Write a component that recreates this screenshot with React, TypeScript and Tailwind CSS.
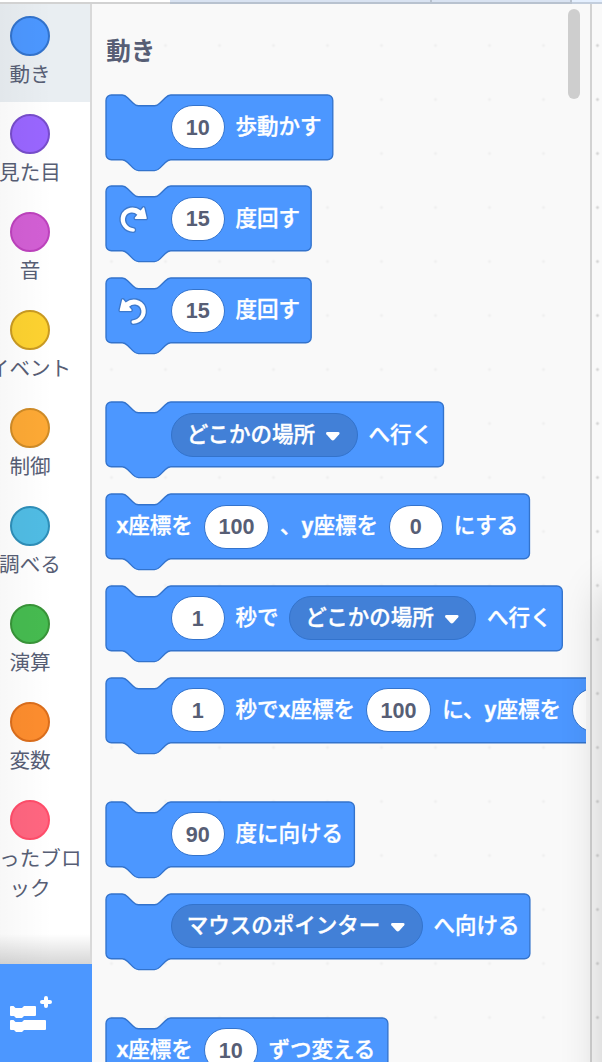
import { ReactNode } from 'react';

// Scratch block units are drawn at 1.35px each
const UNIT = 1.35;

const categories = [
  { name: '動き', color: 'bg-[#4c97ff] border-[#3373cc]', active: true },
  { name: '見た目', color: 'bg-[#9966ff] border-[#774dcb]' },
  { name: '音', color: 'bg-[#d25fd4] border-[#bd42bd]' },
  { name: 'イベント', color: 'bg-[#fdd230] border-[#c99a22]' },
  { name: '制御', color: 'bg-[#fda935] border-[#cf8b27]' },
  { name: '調べる', color: 'bg-[#50bce4] border-[#2e8eb8]' },
  { name: '演算', color: 'bg-[#46bb50] border-[#389438]' },
  { name: '変数', color: 'bg-[#fd8d2e] border-[#db6e1c]' },
  { name: '作ったブロック', color: 'bg-[#ff6680] border-[#ff4d6a]' },
];

const blockPath = (w: number) =>
  `M0,4 A4,4 0 0,1 4,0 H12 c2,0 3,1 4,2 l4,4 c1,1 2,2 4,2 h12 c2,0 3,-1 4,-2 l4,-4 c1,-1 2,-2 4,-2 H${w - 4} a4,4 0 0,1 4,4 v40 a4,4 0 0,1 -4,4 H48 c-2,0 -3,1 -4,2 l-4,4 c-1,1 -2,2 -4,2 h-12 c-2,0 -3,-1 -4,-2 l-4,-4 c-1,-1 -2,-2 -4,-2 H4 a4,4 0 0,1 -4,-4 z`;

interface BlockProps {
  width: number;
  inset?: boolean;
  last?: boolean;
  icon?: ReactNode;
  children: ReactNode;
}

const Block = ({ width, inset, last, icon, children }: BlockProps) => (
  <div
    className={`relative flex h-[64.8px] shrink-0 items-center gap-[10.8px] ${
      last ? 'mb-[59.4px]' : 'mb-[27px]'
    } ${inset ? 'pl-[64.5px]' : 'pl-[10.2px]'}`}
    style={{ width: width * UNIT }}
  >
    <svg
      className="absolute inset-0 overflow-visible"
      width={width * UNIT}
      height={64.8}
      viewBox={`0 0 ${width} 48`}
      preserveAspectRatio="none"
    >
      <path d={blockPath(width)} fill="#4c97ff" stroke="#3373cc" />
    </svg>
    {icon}
    {children}
  </div>
);

const Label = ({ children }: { children: ReactNode }) => (
  <span className="relative shrink-0 pt-px text-[21.5px] leading-none font-medium whitespace-nowrap text-white [-webkit-text-stroke:0.35px_white]">
    {children}
  </span>
);

const NumberInput = ({ value }: { value: string }) => (
  <span
    className={`relative flex h-[44px] shrink-0 items-center justify-center rounded-full border border-[#3373cc] bg-white pt-px text-[21.6px] leading-none font-bold text-[#575e75] ${
      value.length > 2 ? 'w-[65.6px]' : 'w-[54px]'
    }`}
  >
    {value}
  </span>
);

const Dropdown = ({ text }: { text: string }) => (
  <span className="relative flex h-[44.2px] shrink-0 items-center rounded-full border border-[#3373cc] bg-[#4280d7] pr-[16px] pl-[15px] text-[21.5px] leading-none font-medium whitespace-nowrap text-white [-webkit-text-stroke:0.35px_white]">
    <span className="pt-px">{text}</span>
    <svg className="mt-[3px] ml-[10px]" width="15.6" height="11" viewBox="0 0 15.6 11">
      <path
        d="M2.4 1h10.8c1.3 0 1.8 1.4 1 2.3L9.3 8.8c-.9.9-2.1.9-3 0L1.4 3.3C.6 2.4 1.1 1 2.4 1z"
        fill="#fff"
      />
    </svg>
  </span>
);

const TurnIcon = ({ left }: { left?: boolean }) => (
  <svg
    className={`absolute top-[17px] left-[10.8px] ${left ? '-scale-x-100' : ''}`}
    width="32.4"
    height="32.4"
    viewBox="0 0 24 24"
  >
    <path
      d="M22.68 12.2a1.6 1.6 0 0 1-1.27.63h-7.69a1.59 1.59 0 0 1-1.16-2.58l1.12-1.41a4.82 4.82 0 0 0-3.14-.77 4.31 4.31 0 0 0-2 .8 4.25 4.25 0 0 0-1.34 1.73 5.06 5.06 0 0 0 .54 4.62A5.58 5.58 0 0 0 12 17.74a2.26 2.26 0 0 1-.16 4.52A10.25 10.25 0 0 1 3.74 18a10.14 10.14 0 0 1-1.49-9.22 9.7 9.7 0 0 1 2.83-4.14A9.92 9.92 0 0 1 9.66 2.5a10.66 10.66 0 0 1 7.72 1.68l1.08-1.35a1.57 1.57 0 0 1 1.24-.6 1.6 1.6 0 0 1 1.54 1.21l1.7 7.37a1.57 1.57 0 0 1-.26 1.39z"
      fill="#3d79cc"
    />
    <path
      d="M21.38 11.83h-7.61a.59.59 0 0 1-.43-1l1.75-2.19a5.9 5.9 0 0 0-4.7-1.58 5.07 5.07 0 0 0-4.11 3.17A6 6 0 0 0 7 15.77a6.51 6.51 0 0 0 5 2.92 1.31 1.31 0 0 1-.08 2.62 9.3 9.3 0 0 1-7.35-3.82 9.16 9.16 0 0 1-1.4-8.37A8.51 8.51 0 0 1 5.71 5.4a8.76 8.76 0 0 1 4.11-1.92 9.71 9.71 0 0 1 7.75 2.07l1.67-2.1a.59.59 0 0 1 1 .21L22 11.08a.59.59 0 0 1-.62.75z"
      fill="#fff"
    />
  </svg>
);

const Latin = ({ children }: { children: string }) => (
  <span className="font-bold">{children}</span>
);

const CategoryMenu = () => (
  <div className="relative flex w-[92px] shrink-0 flex-col border-r-2 border-[#d9d9d9] bg-white">
    {categories.map((category) => (
      <div
        key={category.name}
        className={`-ml-[30px] flex h-[98px] w-[120px] shrink-0 flex-col items-center pt-3 ${
          category.active ? 'bg-[#e9eef2]' : ''
        }`}
      >
        <div className={`h-10 w-10 shrink-0 rounded-full border-2 ${category.color}`} />
        <div className="mt-1 w-[110px] text-center text-[20.6px] leading-[30px] text-[#575e75]">
          {category.name}
        </div>
      </div>
    ))}
    {/* Edge shading */}
    <div className="absolute inset-y-0 left-0 w-[52px] bg-gradient-to-r from-black/3 to-transparent" />
    <div className="absolute bottom-[98px] left-0 h-[30px] w-[90px] bg-gradient-to-b from-transparent to-black/16" />
    {/* Add extension button */}
    <div className="absolute bottom-0 left-0 h-[98px] w-[92px] bg-[#4c97ff] pt-8 pl-[10px]">
      <svg width="44" height="38" viewBox="0 0 44 38" fill="#fff">
        <path d="M36 0a2 2 0 0 1 2 2v2h2a2 2 0 0 1 0 4h-2v2a2 2 0 0 1-4 0V8h-2a2 2 0 0 1 0-4h2V2a2 2 0 0 1 2-2z" />
        <path d="M1 10h2.5l2 2h6.500l2-2h11a1 1 0 0 1 1 1v8a1 1 0 0 1-1 1H14l-2 2H6l-2-2H1a1 1 0 0 1-1-1v-8a1 1 0 0 1 1-1z" />
        <path d="M1 24h2.5l2 2h6.500l2-2h21a1 1 0 0 1 1 1v8a1 1 0 0 1-1 1H14l-2 2H6l-2-2H1a1 1 0 0 1-1-1v-8a1 1 0 0 1 1-1z" />
      </svg>
    </div>
  </div>
);

const Flyout = () => (
  <div className="relative w-[498px] shrink-0 overflow-hidden bg-[#f9f9f9] bg-[radial-gradient(circle,#f0f0f0_1.2px,transparent_1.8px)] bg-[length:54px_54px] bg-[position:-7.5px_14.5px] pr-1">
    <div className="flex h-full w-[494px] flex-col overflow-hidden pl-[14.2px]">
      <h2 className="mt-[33px] mb-[27.6px] h-[30px] shrink-0 text-[24.6px] leading-[30px] font-bold text-[#575e75]">
        動き
      </h2>

      <Block width={168} inset>
        <NumberInput value="10" />
        <Label>歩動かす</Label>
      </Block>
      <Block width={152} inset icon={<TurnIcon />}>
        <NumberInput value="15" />
        <Label>度回す</Label>
      </Block>
      <Block width={152} inset last icon={<TurnIcon left />}>
        <NumberInput value="15" />
        <Label>度回す</Label>
      </Block>

      <Block width={250} inset>
        <Dropdown text="どこかの場所" />
        <Label>へ行く</Label>
      </Block>
      <Block width={313.7}>
        <Label>
          <Latin>x</Latin>座標を
        </Label>
        <NumberInput value="100" />
        <Label>
          、<Latin>y</Latin>座標を
        </Label>
        <NumberInput value="0" />
        <Label>にする</Label>
      </Block>
      <Block width={338} inset>
        <NumberInput value="1" />
        <Label>秒で</Label>
        <Dropdown text="どこかの場所" />
        <Label>へ行く</Label>
      </Block>
      <Block width={440} inset last>
        <NumberInput value="1" />
        <Label>
          秒で<Latin>x</Latin>座標を
        </Label>
        <NumberInput value="100" />
        <Label>
          に、<Latin>y</Latin>座標を
        </Label>
        <NumberInput value="0" />
      </Block>

      <Block width={184} inset>
        <NumberInput value="90" />
        <Label>度に向ける</Label>
      </Block>
      <Block width={314} inset last>
        <Dropdown text="マウスのポインター" />
        <Label>へ向ける</Label>
      </Block>

      <Block width={208.8}>
        <Label>
          <Latin>x</Latin>座標を
        </Label>
        <NumberInput value="10" />
        <Label>ずつ変える</Label>
      </Block>
    </div>
    {/* Scrollbar */}
    <div className="absolute top-[5px] right-[10px] h-[90px] w-3 rounded-full bg-[#cecece]" />
  </div>
);

const App = () => (
  <div className="relative flex h-[1062px] w-[602px] flex-col overflow-hidden bg-white font-['Liberation_Sans','Noto_Sans_CJK_JP',sans-serif]">
    {/* Bottom edge of the tab strip */}
    <div className="flex h-1 shrink-0">
      <div className="w-[170px] border-b-2 border-[#d2d2d2] bg-white" />
      <div className="w-[262px] border-r-2 border-b-2 border-[#b8c2cf] bg-[#d9e3f2]" />
      <div className="w-[140px] border-r-2 border-b-2 border-[#b8c2cf] bg-[#d9e3f2]" />
      <div className="flex-1 border-b-2 border-[#c3cedd] bg-[#e5f0ff]" />
    </div>
    <div className="flex min-h-0 flex-1">
      <CategoryMenu />
      <Flyout />
      <div className="flex-1 border-l-2 border-[#d2d2d2] bg-[#f9f9f9] bg-[radial-gradient(circle,#d4d4d4_1.2px,transparent_1.8px)] bg-[length:54px_54px] bg-[position:-21.5px_14.5px]" />
    </div>
    {/* Shadow cast from the stage side */}
    <div className="pointer-events-none absolute top-[590px] left-[604px] h-[600px] w-[100px] shadow-[0_0_44px_rgba(0,0,0,0.2)]" />
  </div>
);

export default App;
